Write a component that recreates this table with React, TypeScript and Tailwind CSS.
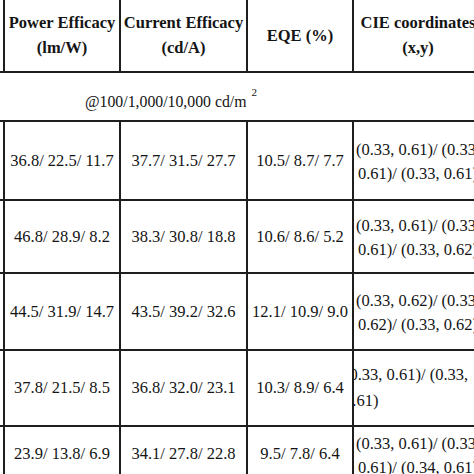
const rows = [
  {
    h: "h-[79px]",
    pe: "36.8/ 22.5/ 11.7",
    ce: "37.7/ 31.5/ 27.7",
    eqe: "10.5/ 8.7/ 7.7",
    cie: ["(0.33, 0.61)/ (0.33,", "0.61)/ (0.33, 0.61)"],
  },
  {
    h: "h-[73px]",
    pe: "46.8/ 28.9/ 8.2",
    ce: "38.3/ 30.8/ 18.8",
    eqe: "10.6/ 8.6/ 5.2",
    cie: ["(0.33, 0.61)/ (0.33,", "0.61)/ (0.33, 0.62)"],
  },
  {
    h: "h-[77px]",
    pe: "44.5/ 31.9/ 14.7",
    ce: "43.5/ 39.2/ 32.6",
    eqe: "12.1/ 10.9/ 9.0",
    cie: ["(0.33, 0.62)/ (0.33,", "0.62)/ (0.33, 0.62)"],
  },
  {
    h: "h-[76px]",
    pe: "37.8/ 21.5/ 8.5",
    ce: "36.8/ 32.0/ 23.1",
    eqe: "10.3/ 8.9/ 6.4",
    cie: ["(0.33, 0.61)/ (0.33,", "0.61)"],
    shifted: true,
  },
  {
    h: "h-[56px]",
    pe: "23.9/ 13.8/ 6.9",
    ce: "34.1/ 27.8/ 22.8",
    eqe: "9.5/ 7.8/ 6.4",
    cie: ["(0.33, 0.61)/ (0.33,", "0.61)/ (0.34, 0.61)"],
  },
];

const cell = "h-full border-r-2 border-[#1e1e1e] flex items-center justify-center shrink-0";

export default function App() {
  return (
    <div className="w-[474px] h-[474px] overflow-hidden bg-white text-[#141414] font-['Liberation_Serif','Times_New_Roman',serif]">
      <div className="w-[500px]">
        {/* header */}
        <div className="flex h-[73px] border-b-2 border-[#1e1e1e] font-bold text-[16.5px] leading-[25px] text-center">
          <div className={`${cell} w-[5px]`} />
          <div className={`${cell} w-[116px] flex-col pb-[1px]`}>
            <span className="whitespace-nowrap">Power Efficacy</span>
            <span>(lm/W)</span>
          </div>
          <div className={`${cell} w-[127px] flex-col pb-[1px]`}>
            <span className="whitespace-nowrap">Current Efficacy</span>
            <span>(cd/A)</span>
          </div>
          <div className={`${cell} w-[106px]`}>EQE (%)</div>
          <div className={`${cell} w-[130px] flex-col pb-[1px]`}>
            <span className="whitespace-nowrap">CIE coordinates</span>
            <span>(x,y)</span>
          </div>
        </div>

        {/* units row */}
        <div className="h-[49px] border-b-2 border-[#1e1e1e] pl-[85px] pt-[17px] text-[15.8px] leading-[24px] whitespace-nowrap">
          @100/1,000/10,000 cd/m
          <span className="relative -top-[11px] ml-[5px] text-[11px] leading-none">2</span>
        </div>

        {rows.map((r, i) => (
          <div key={i} className={`flex ${r.h} border-b-2 border-[#1e1e1e] text-[16.5px] leading-[24px] text-center`}>
            <div className={`${cell} w-[5px]`} />
            <div className={`${cell} w-[116px] whitespace-nowrap`}>{r.pe}</div>
            <div className={`${cell} w-[127px] whitespace-nowrap`}>{r.ce}</div>
            <div className={`${cell} w-[106px] whitespace-nowrap`}>{r.eqe}</div>
            {r.shifted ? (
              <div className={`${cell} w-[130px] overflow-hidden !justify-start`}>
                <div className="-ml-[10px] text-left leading-[26px] whitespace-nowrap">
                  <div>{r.cie[0]}</div>
                  <div>{r.cie[1]}</div>
                </div>
              </div>
            ) : (
              <div className={`${cell} w-[130px] flex-col whitespace-nowrap pt-[3px]`}>
                <div>{r.cie[0]}</div>
                <div>{r.cie[1]}</div>
              </div>
            )}
          </div>
        ))}
      </div>
    </div>
  );
}
